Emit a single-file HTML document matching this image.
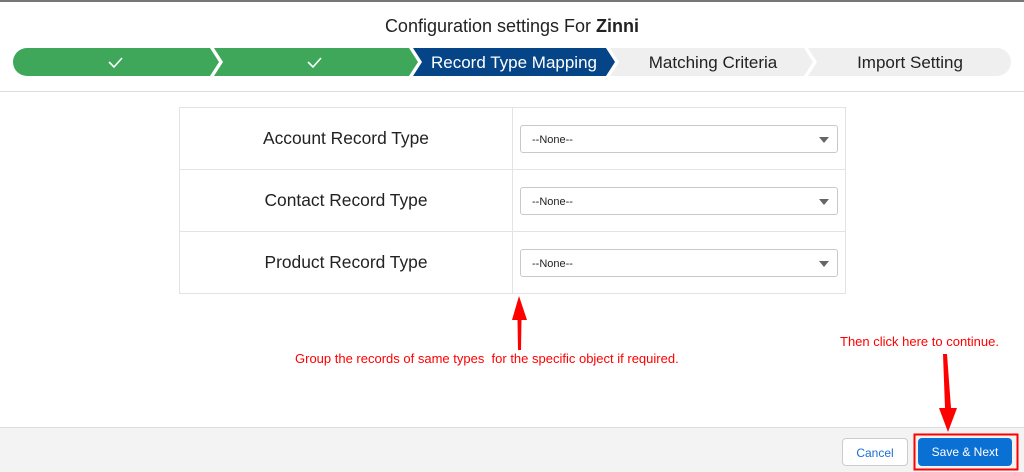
<!DOCTYPE html>
<html><head><style>
body{margin:0;width:1024px;height:471px;overflow:hidden;background:#fff;font-family:"Liberation Sans",sans-serif;position:relative}
.top{position:absolute;left:0;top:0;width:1024px;height:2px;background:#777}
.title{position:absolute;top:16px;width:1024px;text-align:center;font-size:18px;color:#222}
.hline{position:absolute;left:0;top:91px;width:1024px;height:1px;background:#ddd}
table{position:absolute;left:179px;top:107px;border-collapse:collapse}
td{border:1px solid #e3e3e3;height:61px;padding:0}
td.l{width:332px;text-align:center;font-size:17.4px;color:#222}
td.r{width:332px}
.sel{margin-left:7px;width:318px;height:28px;border:1px solid #c9c9c9;border-radius:3px;font-size:11px;color:#222;line-height:28px;box-sizing:border-box;padding-left:11px;position:relative}
.sel:after{content:"";position:absolute;right:8px;top:11px;border-left:5px solid transparent;border-right:5px solid transparent;border-top:6px solid #666}
.red{position:absolute;color:#f00;font-size:13px}
.foot{position:absolute;left:0;top:427px;width:1024px;height:44px;background:#f3f3f3;border-top:1px solid #ddd}
.btn{position:absolute;top:438px;height:28px;border-radius:4px;font-size:12px;line-height:28px;text-align:center;box-sizing:border-box}
</style></head><body>
<div class="top"></div>
<div class="title">Configuration settings For <b>Zinni</b></div>
<svg style="position:absolute;left:0;top:48px" width="1024" height="29">
<path d="M27 0 L210 0 L219 14 L210 28 L27 28 A14 14 0 0 1 27 0Z" fill="#3ea75a"/>
<path d="M214 0 L409 0 L418 14 L409 28 L214 28 L223 14Z" fill="#3ea75a"/>
<path d="M413 0 L606 0 L615 14 L606 28 L413 28 L422 14Z" fill="#054587"/>
<path d="M610 0 L804 0 L813 14 L804 28 L610 28 L619 14Z" fill="#efefef"/>
<path d="M808 0 L997 0 A14 14 0 0 1 997 28 L808 28 L817 14Z" fill="#efefef"/>
<path d="M109 14 L114 19 L122 10" stroke="#fff" stroke-width="1.6" fill="none"/>
<path d="M308 14 L313 19 L321 10" stroke="#fff" stroke-width="1.6" fill="none"/>
<text x="514" y="20" fill="#fff" font-size="17" text-anchor="middle" font-family="Liberation Sans">Record Type Mapping</text>
<text x="713" y="20" fill="#222" font-size="17" text-anchor="middle" font-family="Liberation Sans">Matching Criteria</text>
<text x="910" y="20" fill="#222" font-size="17" text-anchor="middle" font-family="Liberation Sans">Import Setting</text>
</svg>
<div class="hline"></div>
<table>
<tr><td class="l">Account Record Type</td><td class="r"><div class="sel">--None--</div></td></tr>
<tr><td class="l">Contact Record Type</td><td class="r"><div class="sel">--None--</div></td></tr>
<tr><td class="l">Product Record Type</td><td class="r"><div class="sel">--None--</div></td></tr>
</table>
<div class="red" style="left:295px;top:351px">Group the records of same types&nbsp; for the specific object if required.</div>
<div class="red" style="left:840px;top:334px">Then click here to continue.</div>
<div class="foot"></div>
<svg style="position:absolute;left:0;top:0" width="1024" height="471">
<path d="M519 296 L512 320 L517.5 320 L518 350 L521 350 L521.5 320 L527 320Z" fill="#f00"/>
<path d="M943 354 L945 408 L939 408 L948 432 L957 408 L951 408 L947 354Z" fill="#f00"/>
<rect x="914.5" y="434.5" width="103" height="35" fill="none" stroke="#f00" stroke-width="2"/>
</svg>
<div class="btn" style="left:842px;width:66px;background:#fff;border:1px solid #ccc;color:#1b6fd6">Cancel</div>
<div class="btn" style="left:918px;width:94px;background:#0b70d3;color:#fff">Save &amp; Next</div>
</body></html>
